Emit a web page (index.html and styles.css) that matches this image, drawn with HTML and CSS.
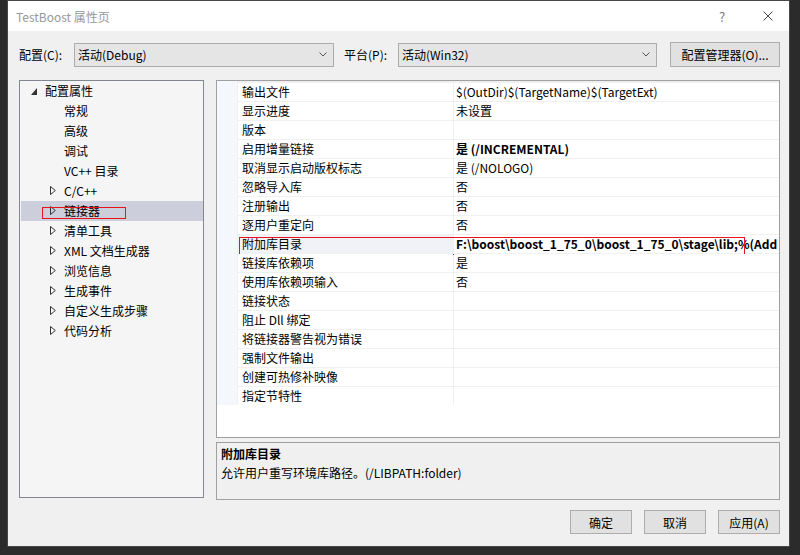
FILE: index.html
```html
<!DOCTYPE html>
<html lang="zh-CN">
<head>
    <meta charset="UTF-8">
    <title>TestBoost 属性页</title>
    <link rel="stylesheet" href="styles.css">
</head>
<body>

    <div class="dialog">
        <!-- Title Bar -->
        <div class="titlebar">
            <span class="title-text">TestBoost 属性页</span>
            <span class="title-help">?</span>
            <svg class="title-close" width="10" height="10" viewBox="0 0 10 10">
                <path d="M0.5 0.5 L9.5 9.5 M9.5 0.5 L0.5 9.5" stroke="#444" stroke-width="1" fill="none"/>
            </svg>
        </div>

        <div class="content">
            <!-- Configuration / Platform -->
            <div class="toolbar">
                <label class="tool-label">配置(C):</label>
                <div class="combo combo-config">
                    <span>活动(Debug)</span>
                    <svg width="8" height="5" viewBox="0 0 8 5"><polyline points="0.5,0.5 4,4 7.5,0.5" stroke="#555" fill="none"/></svg>
                </div>
                <label class="tool-label tool-label-platform">平台(P):</label>
                <div class="combo combo-platform">
                    <span>活动(Win32)</span>
                    <svg width="8" height="5" viewBox="0 0 8 5"><polyline points="0.5,0.5 4,4 7.5,0.5" stroke="#555" fill="none"/></svg>
                </div>
                <button class="btn btn-manager">配置管理器(O)...</button>
            </div>

            <div class="main">
                <!-- Tree -->
                <div class="tree">
                    <div class="tree-item tree-root">
                        <span class="twisty"><svg width="6" height="7" viewBox="0 0 6 7"><polygon points="6,0 6,7 0,7" fill="#333"/></svg></span>
                        配置属性
                    </div>
                    <div class="tree-item tree-child"><span class="twisty"></span>常规</div>
                    <div class="tree-item tree-child"><span class="twisty"></span>高级</div>
                    <div class="tree-item tree-child"><span class="twisty"></span>调试</div>
                    <div class="tree-item tree-child"><span class="twisty"></span>VC++ 目录</div>
                    <div class="tree-item tree-child"><span class="twisty"><svg width="6" height="9" viewBox="0 0 6 9"><polygon points="0.5,0.5 5.3,4.5 0.5,8.5" stroke="#333" fill="none"/></svg></span>C/C++</div>
                    <div class="tree-item tree-child selected"><span class="twisty"><svg width="6" height="9" viewBox="0 0 6 9"><polygon points="0.5,0.5 5.3,4.5 0.5,8.5" stroke="#333" fill="none"/></svg></span>链接器<span class="mark mark-tree"></span></div>
                    <div class="tree-item tree-child"><span class="twisty"><svg width="6" height="9" viewBox="0 0 6 9"><polygon points="0.5,0.5 5.3,4.5 0.5,8.5" stroke="#333" fill="none"/></svg></span>清单工具</div>
                    <div class="tree-item tree-child"><span class="twisty"><svg width="6" height="9" viewBox="0 0 6 9"><polygon points="0.5,0.5 5.3,4.5 0.5,8.5" stroke="#333" fill="none"/></svg></span>XML 文档生成器</div>
                    <div class="tree-item tree-child"><span class="twisty"><svg width="6" height="9" viewBox="0 0 6 9"><polygon points="0.5,0.5 5.3,4.5 0.5,8.5" stroke="#333" fill="none"/></svg></span>浏览信息</div>
                    <div class="tree-item tree-child"><span class="twisty"><svg width="6" height="9" viewBox="0 0 6 9"><polygon points="0.5,0.5 5.3,4.5 0.5,8.5" stroke="#333" fill="none"/></svg></span>生成事件</div>
                    <div class="tree-item tree-child"><span class="twisty"><svg width="6" height="9" viewBox="0 0 6 9"><polygon points="0.5,0.5 5.3,4.5 0.5,8.5" stroke="#333" fill="none"/></svg></span>自定义生成步骤</div>
                    <div class="tree-item tree-child"><span class="twisty"><svg width="6" height="9" viewBox="0 0 6 9"><polygon points="0.5,0.5 5.3,4.5 0.5,8.5" stroke="#333" fill="none"/></svg></span>代码分析</div>
                </div>

                <div class="right">
                    <!-- Property Grid -->
                    <div class="grid">
                        <div class="rows">
                            <div class="row"><span></span><span class="name">输出文件</span><span class="value">$(OutDir)$(TargetName)$(TargetExt)</span></div>
                            <div class="row"><span></span><span class="name">显示进度</span><span class="value">未设置</span></div>
                            <div class="row"><span></span><span class="name">版本</span><span class="value"></span></div>
                            <div class="row"><span></span><span class="name">启用增量链接</span><span class="value bold">是 (/INCREMENTAL)</span></div>
                            <div class="row"><span></span><span class="name">取消显示启动版权标志</span><span class="value">是 (/NOLOGO)</span></div>
                            <div class="row"><span></span><span class="name">忽略导入库</span><span class="value">否</span></div>
                            <div class="row"><span></span><span class="name">注册输出</span><span class="value">否</span></div>
                            <div class="row"><span></span><span class="name">逐用户重定向</span><span class="value">否</span></div>
                            <div class="row row-selected"><span></span><span class="name">附加库目录</span><span class="value bold">F:\boost\boost_1_75_0\boost_1_75_0\stage\lib;%(Add</span><span class="mark mark-row"></span></div>
                            <div class="row"><span></span><span class="name">链接库依赖项</span><span class="value">是</span></div>
                            <div class="row"><span></span><span class="name">使用库依赖项输入</span><span class="value">否</span></div>
                            <div class="row"><span></span><span class="name">链接状态</span><span class="value"></span></div>
                            <div class="row"><span></span><span class="name">阻止 Dll 绑定</span><span class="value"></span></div>
                            <div class="row"><span></span><span class="name">将链接器警告视为错误</span><span class="value"></span></div>
                            <div class="row"><span></span><span class="name">强制文件输出</span><span class="value"></span></div>
                            <div class="row"><span></span><span class="name">创建可热修补映像</span><span class="value"></span></div>
                            <div class="row"><span></span><span class="name">指定节特性</span><span class="value"></span></div>
                        </div>
                    </div>

                    <!-- Description -->
                    <div class="desc">
                        <div class="desc-title">附加库目录</div>
                        <div class="desc-text">允许用户重写环境库路径。(/LIBPATH:folder)</div>
                    </div>
                </div>
            </div>

            <!-- Dialog Buttons -->
            <div class="actions">
                <button class="btn btn-action">确定</button>
                <button class="btn btn-action">取消</button>
                <button class="btn btn-action">应用(A)</button>
            </div>
        </div>
    </div>

</body>
</html>
```

FILE: styles.css
```css
/* Basic Reset */
* {
    margin: 0;
    padding: 0;
    box-sizing: border-box;
}

body {
    background: #2b2b2b;
    font-family: "Noto Sans CJK SC", "Microsoft YaHei", sans-serif;
    font-size: 12px;
    color: #000;
    width: 800px;
    height: 555px;
    overflow: hidden;
}

/* Dialog Window */
.dialog {
    margin-left: 7px;
    width: 783px;
    height: 547px;
    background: #f0f0f0;
    border: 1px solid #474747;
}

.titlebar {
    height: 30px;
    background: #fff;
    display: flex;
    align-items: center;
    padding-left: 8px;
    padding-right: 16px;
    color: #999;
}

.title-text {
    flex: 1;
    font-size: 12px;
}

.title-help {
    width: 20px;
    text-align: center;
    color: #777;
    font-size: 13px;
}

.title-close {
    margin-left: 31px;
}

.content {
    padding: 11px 9px 0 11px;
}

/* Toolbar */
.toolbar {
    display: flex;
    align-items: center;
    height: 25px;
}

.tool-label {
    width: 55px;
    line-height: 24px;
}

.tool-label-platform {
    margin-left: 10px;
    width: 54px;
}

.combo {
    height: 24px;
    background: #e5e5e5;
    border: 1px solid #acacac;
    display: flex;
    align-items: center;
    justify-content: space-between;
    padding: 0 6px 0 3px;
}

.combo-config {
    width: 260px;
}

.combo-platform {
    width: 259px;
}

.btn {
    font-family: inherit;
    font-size: 12px;
    color: #000;
    background: #e1e1e1;
    border: 1px solid #adadad;
    height: 24px;
}

.btn-manager {
    margin-left: 13px;
    width: 110px;
    height: 25px;
}

/* Main Area */
.main {
    display: flex;
    margin-top: 13px;
}

.tree {
    width: 185px;
    height: 418px;
    border: 1px solid #828790;
    background: #f5f5f5;
}

.tree-item {
    height: 20px;
    display: flex;
    align-items: center;
    position: relative;
    padding-bottom: 2px;
}

.tree-root {
    padding-left: 10px;
}

.tree-child {
    padding-left: 29px;
}

.twisty {
    width: 15px;
    height: 18px;
    display: flex;
    align-items: center;
    padding-left: 1px;
}

.tree-root .twisty {
    padding-top: 2px;
}

.tree-child .twisty {
    padding-top: 1px;
}

.tree-item.selected {
    background: #cccedb;
    margin-left: 1px;
    padding-left: 28px;
}

.mark {
    position: absolute;
    border: 1px solid #e8141c;
    pointer-events: none;
}

.mark-tree {
    left: 21px;
    top: 6px;
    width: 84px;
    height: 12px;
}

.right {
    margin-left: 12px;
    width: 564px;
    display: flex;
    flex-direction: column;
}

/* Property Grid */
.grid {
    height: 358px;
    border: 1px solid #a0a0a0;
    background: #fff;
    overflow: hidden;
}

.rows {
    padding-top: 2px;
    display: flex;
    flex-direction: column;
    gap: 1px;
    background: linear-gradient(to right, #f4f7fc 20px, #f0f0f0 20px);
}

.row {
    height: 18px;
    display: grid;
    grid-template-columns: 20px 215px 1fr;
    column-gap: 1px;
    position: relative;
    line-height: 18px;
}

.row .name {
    background: #fff;
    padding-left: 4px;
    white-space: nowrap;
}

.row .value {
    background: #fff;
    padding-left: 2px;
    white-space: nowrap;
    overflow: hidden;
}

.row-selected .name {
    background: #f0f2f7;
}

.bold {
    font-weight: bold;
}

.mark-row {
    left: 22px;
    top: 2px;
    width: 506px;
    height: 18px;
}

/* Description */
.desc {
    margin-top: 4px;
    height: 58px;
    border: 1px solid #a0a0a0;
    background: #f0f0f0;
    padding: 1px 4px;
    line-height: 19px;
}

.desc-title {
    font-weight: bold;
}

/* Buttons */
.actions {
    display: flex;
    justify-content: flex-end;
    gap: 12px;
    margin-top: 10px;
}

.btn-action {
    width: 62px;
}
```
